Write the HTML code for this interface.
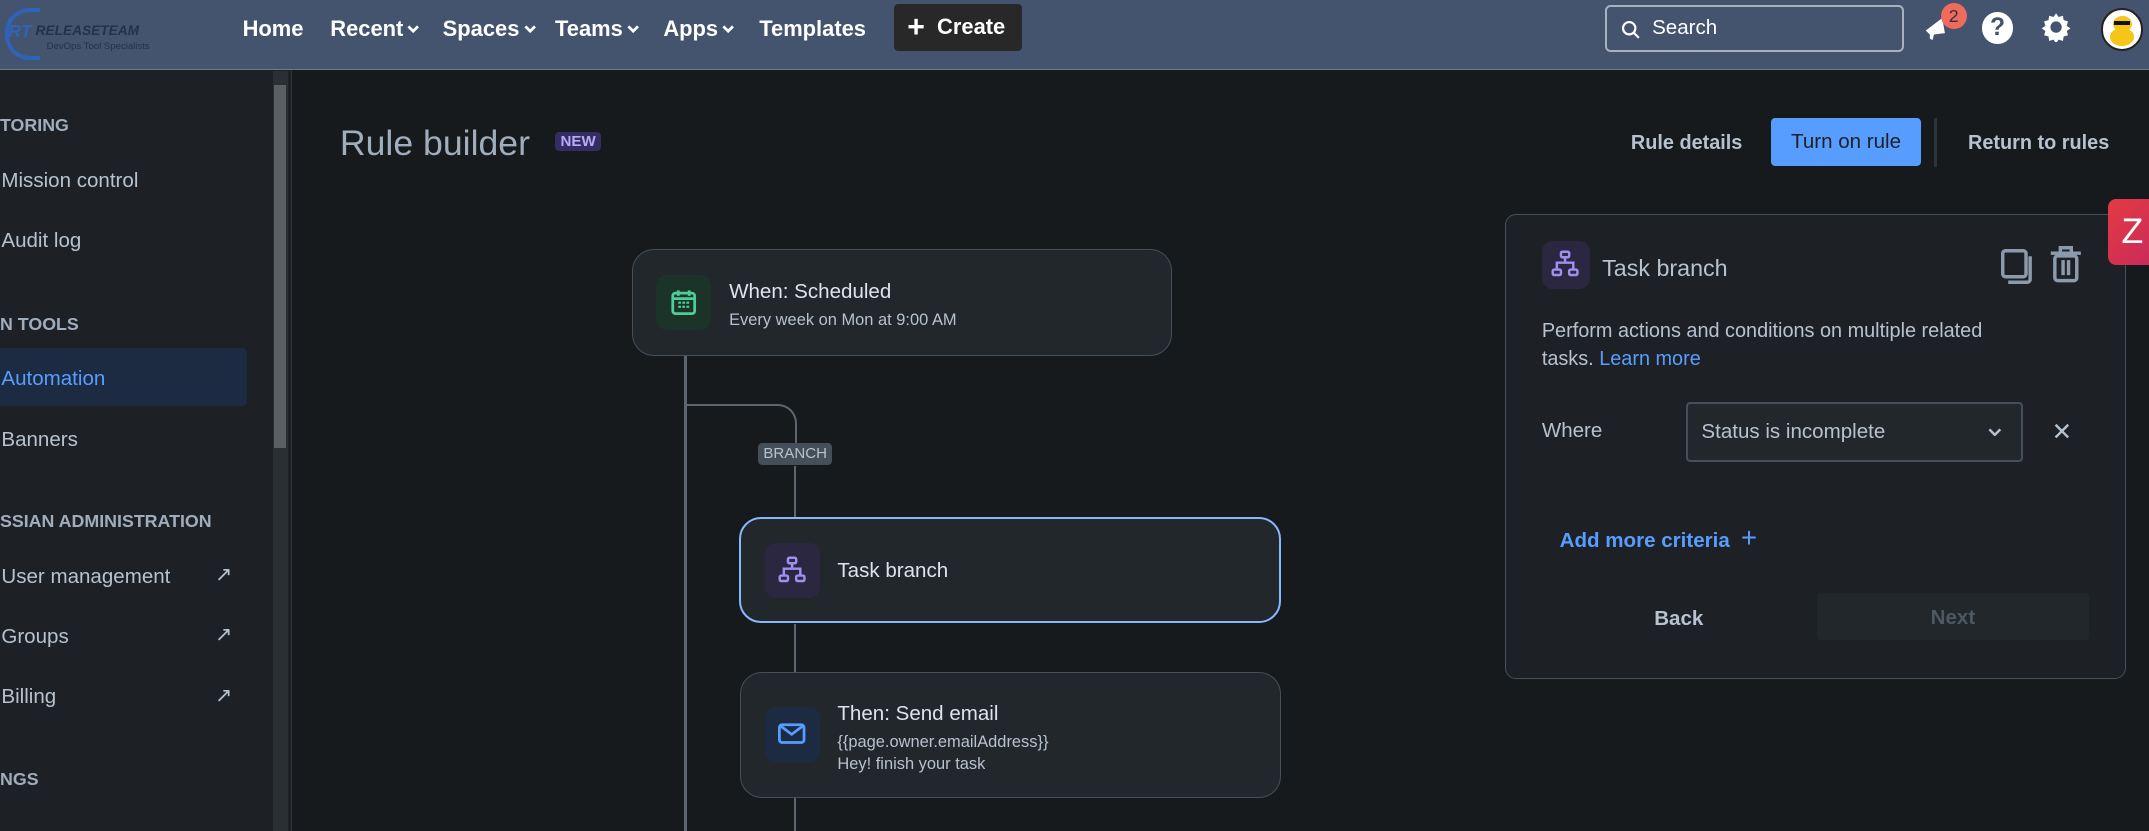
<!DOCTYPE html>
<html><head><meta charset="utf-8"><style>
html,body{margin:0;padding:0;}
body{width:2149px;height:830px;overflow:hidden;background:#161a1d;font-family:"Liberation Sans",sans-serif;}
#z{zoom:1.3705;width:1568px;height:606px;position:relative;overflow:hidden;color:#b6c2cf;}
.a{position:absolute;}
.hdr{left:0;top:0;width:1568px;height:50px;background:#44546f;border-bottom:1px solid #6b7a90;}
.nav{top:12px;color:#fff;font-size:16px;font-weight:bold;}
.nav svg{margin-left:3px;vertical-align:2px}
.side{left:0;top:51px;width:212px;height:555px;background:#1d2125;border-right:1px solid #2c333a;}
.sh{font-size:13px;font-weight:bold;color:#9fadbc;left:0;}
.si{font-size:15px;color:#b6c2cf;left:1px;}
.card{background:#22272b;border:1px solid #454f59;border-radius:16px;}
.ic{width:40px;height:40px;border-radius:8px;}
.t{font-size:15px;color:#dee4ea;}
.s{font-size:12px;color:#b6c2cf;}
.ln{background:#5c6670;}
</style></head><body><div id="z">
<div class="a hdr"></div>
<div class="a" style="left:4px;top:6px;width:140px;height:34px;">
<div class="a" style="left:0;top:0;width:22px;height:32px;border:3px solid #2f63b8;border-right:none;border-radius:18px 0 0 18px;"></div>
<div class="a" style="left:2px;top:9px;font:italic bold 13px 'Liberation Sans';color:#2f63b8;">RT</div>
<div class="a" style="left:22px;top:11px;font:italic bold 10px 'Liberation Sans';color:#23324a;">RELEASETEAM</div>
<div class="a" style="left:30px;top:24px;font-size:7px;color:#23324a;">DevOps Tool Specialists</div></div>
<div class="a nav" style="left:177px">Home</div>
<div class="a nav" style="left:241px">Recent<svg width="9" height="6" viewBox="0 0 9 6"><path d="M1 1l3.5 3.5L8 1" fill="none" stroke="#fff" stroke-width="2"/></svg></div>
<div class="a nav" style="left:323px">Spaces<svg width="9" height="6" viewBox="0 0 9 6"><path d="M1 1l3.5 3.5L8 1" fill="none" stroke="#fff" stroke-width="2"/></svg></div>
<div class="a nav" style="left:405px">Teams<svg width="9" height="6" viewBox="0 0 9 6"><path d="M1 1l3.5 3.5L8 1" fill="none" stroke="#fff" stroke-width="2"/></svg></div>
<div class="a nav" style="left:484px">Apps<svg width="9" height="6" viewBox="0 0 9 6"><path d="M1 1l3.5 3.5L8 1" fill="none" stroke="#fff" stroke-width="2"/></svg></div>
<div class="a nav" style="left:554px">Templates</div>
<div class="a" style="left:652px;top:3px;width:94px;height:34px;background:#282828;border-radius:3px;color:#fff;font-size:16px;font-weight:bold;line-height:34px;"><span style="margin-left:10px;font-size:22px;vertical-align:-2px">+</span>&nbsp; Create</div>
<div class="a" style="left:1171px;top:4px;width:215px;height:31px;border:2px solid #a8b1bd;border-radius:4px;color:#fff;font-size:15px;line-height:31px;">
<svg class="a" style="left:10px;top:9px" width="14" height="14" viewBox="0 0 14 14"><circle cx="6" cy="6" r="4.5" fill="none" stroke="#fff" stroke-width="1.6"/><path d="M9.5 9.5L13 13" stroke="#fff" stroke-width="1.6"/></svg><span style="margin-left:33px">Search</span></div>
<svg class="a" style="left:1403px;top:10px" width="20" height="22" viewBox="0 0 20 22"><path d="M2 12L14 3L16 14L8 15L7 19L5 18L5 15Z" fill="#fff"/></svg>
<div class="a" style="left:1416px;top:2px;width:19px;height:19px;border-radius:50%;background:#f06a5e;color:#333;font-size:13px;text-align:center;line-height:19px;">2</div>
<div class="a" style="left:1446px;top:9px;width:23px;height:23px;border-radius:50%;background:#fff;color:#44546f;font-size:18px;font-weight:bold;text-align:center;line-height:23px;">?</div>
<svg class="a" style="left:1489px;top:9px" width="22" height="22" viewBox="0 0 24 24"><path d="M12 1l2 3 3.5-1 .5 3.5 3.5 1-1 3.5 3 2-3 2 1 3.5-3.5 1-.5 3.5-3.5-1-2 3-2-3-3.5 1-.5-3.5-3.5-1 1-3.5-3-2 3-2-1-3.5 3.5-1 .5-3.5 3.5 1z" fill="#fff"/><circle cx="12" cy="12" r="4.5" fill="#44546f"/></svg>
<div class="a" style="left:1533px;top:6px;width:28px;height:28px;border-radius:50%;background:#fff;border:2px solid #222;overflow:hidden;"><div class="a" style="left:7px;top:4px;width:14px;height:12px;border-radius:50%;background:#f5c518"></div><div class="a" style="left:5px;top:13px;width:18px;height:13px;border-radius:50%;background:#f5c518"></div><div class="a" style="left:8px;top:8px;width:12px;height:3px;background:#111"></div></div>

<div class="a side"></div>
<div class="a" style="left:199px;top:52px;width:11px;height:554px;background:#2a2f33"></div>
<div class="a" style="left:200px;top:62px;width:9px;height:265px;background:#5a5f63"></div>
<div class="a sh" style="top:84px">TORING</div>
<div class="a si" style="top:123px">Mission control</div>
<div class="a si" style="top:167px">Audit log</div>
<div class="a sh" style="top:229px">N TOOLS</div>
<div class="a" style="left:0;top:254px;width:180px;height:42px;background:#1c2b41;border-radius:0 3px 3px 0"></div>
<div class="a si" style="top:268px;color:#579dff">Automation</div>
<div class="a si" style="top:312px">Banners</div>
<div class="a sh" style="top:373px">SSIAN ADMINISTRATION</div>
<div class="a si" style="top:412px">User management</div><div class="a si" style="left:157px;top:410px">↗</div>
<div class="a si" style="top:456px">Groups</div><div class="a si" style="left:157px;top:454px">↗</div>
<div class="a si" style="top:500px">Billing</div><div class="a si" style="left:157px;top:498px">↗</div>
<div class="a sh" style="top:561px">NGS</div>

<div class="a" style="left:248px;top:90px;font-size:26px;color:#9fadbc">Rule builder</div>
<div class="a" style="left:405px;top:96px;padding:1px 4px;background:#352c63;color:#b8acf6;font-size:11px;font-weight:bold;border-radius:3px">NEW</div>
<div class="a" style="left:1190px;top:96px;font-size:14.5px;color:#b6c2cf;font-weight:bold">Rule details</div>
<div class="a" style="left:1292px;top:86px;width:110px;height:35px;background:#579dff;border-radius:3px;color:#1d2125;font-size:15px;text-align:center;line-height:35px">Turn on rule</div>
<div class="a" style="left:1411px;top:86px;width:2px;height:36px;background:#2c333a"></div>
<div class="a" style="left:1436px;top:96px;font-size:14.5px;color:#b6c2cf;font-weight:bold">Return to rules</div>

<div class="a ln" style="left:499px;top:259px;width:2px;height:347px"></div>
<div class="a" style="left:500px;top:295px;width:80px;height:40px;border-top:2px solid #5c6670;border-right:2px solid #5c6670;border-radius:0 14px 0 0"></div>
<div class="a ln" style="left:579px;top:340px;width:2px;height:40px"></div>
<div class="a ln" style="left:579px;top:455px;width:2px;height:36px"></div>
<div class="a ln" style="left:579px;top:582px;width:2px;height:24px"></div>
<div class="a" style="left:553px;top:323px;padding:2px 4px;background:#454f59;color:#b6c2cf;font-size:11px;border-radius:3px">BRANCH</div>

<div class="a card" style="left:461px;top:182px;width:393px;height:76px"></div>
<div class="a ic" style="left:479px;top:201px;background:#1c3329"></div>
<svg class="a" style="left:489px;top:211px" width="20" height="20" viewBox="0 0 20 20"><rect x="2" y="3" width="16" height="15" rx="2" fill="none" stroke="#4bce97" stroke-width="2"/><path d="M2 7h16M6 1v4M14 1v4" stroke="#4bce97" stroke-width="2"/><path d="M6 10h2M9 10h2M12 10h2M6 13h2M9 13h2M12 13h2" stroke="#4bce97" stroke-width="1.5"/></svg>
<div class="a t" style="left:532px;top:204px">When: Scheduled</div>
<div class="a s" style="left:532px;top:227px">Every week on Mon at 9:00 AM</div>

<div class="a card" style="left:539px;top:377px;width:393px;height:75px;border:2px solid #85b8ff"></div>
<div class="a ic" style="left:558px;top:396px;background:#2b2740"></div>
<svg class="a" style="left:567px;top:405px" width="22" height="22" viewBox="0 0 22 22"><g fill="none" stroke="#9f8fef" stroke-width="1.8"><rect x="8" y="2" width="6" height="4" rx="1"/><rect x="2" y="15" width="6" height="4" rx="1"/><rect x="14" y="15" width="6" height="4" rx="1"/><path d="M11 6v4M5 15v-5h12v5"/></g></svg>
<div class="a t" style="left:611px;top:408px">Task branch</div>

<div class="a card" style="left:540px;top:490px;width:393px;height:91px"></div>
<div class="a ic" style="left:558px;top:516px;background:#1c2b41"></div>
<svg class="a" style="left:568px;top:527px" width="20" height="18" viewBox="0 0 20 18"><rect x="1" y="2" width="18" height="13" rx="2" fill="none" stroke="#579dff" stroke-width="2"/><path d="M2 3l8 6 8-6" fill="none" stroke="#579dff" stroke-width="2"/></svg>
<div class="a t" style="left:611px;top:512px">Then: Send email</div>
<div class="a s" style="left:611px;top:535px">{{page.owner.emailAddress}}</div>
<div class="a s" style="left:611px;top:551px">Hey! finish your task</div>

<div class="a" style="left:1098px;top:156px;width:452px;height:338px;background:#1d2125;border:1px solid #454f59;border-radius:8px"></div>
<div class="a ic" style="left:1125px;top:176px;width:35px;height:35px;background:#2b2740"></div>
<svg class="a" style="left:1131px;top:182px" width="22" height="22" viewBox="0 0 22 22"><g fill="none" stroke="#9f8fef" stroke-width="1.8"><rect x="8" y="2" width="6" height="4" rx="1"/><rect x="2" y="15" width="6" height="4" rx="1"/><rect x="14" y="15" width="6" height="4" rx="1"/><path d="M11 6v4M5 15v-5h12v5"/></g></svg>
<div class="a" style="left:1169px;top:186px;font-size:17px;color:#b6c2cf">Task branch</div>
<svg class="a" style="left:1459px;top:181px" width="26" height="28" viewBox="0 0 26 28"><rect x="2" y="2" width="17" height="19" rx="2" fill="none" stroke="#8c9bab" stroke-width="2.5"/><path d="M22 6v17a2 2 0 0 1-2 2H6" fill="none" stroke="#8c9bab" stroke-width="2.5"/></svg>
<svg class="a" style="left:1494px;top:179px" width="26" height="28" viewBox="0 0 26 28"><path d="M2 6h22M9 6V2h8v4" fill="none" stroke="#8c9bab" stroke-width="2.5"/><rect x="5" y="8" width="16" height="18" rx="2" fill="none" stroke="#8c9bab" stroke-width="2.5"/><path d="M11 11v11M15 11v11" stroke="#8c9bab" stroke-width="2.5"/></svg>
<div class="a" style="left:1125px;top:231px;font-size:14.5px;line-height:21px;color:#b6c2cf;width:355px">Perform actions and conditions on multiple related tasks. <span style="color:#579dff">Learn more</span></div>
<div class="a" style="left:1125px;top:306px;font-size:15px;color:#b6c2cf">Where</div>
<div class="a" style="left:1230px;top:293px;width:243px;height:41px;background:#22272b;border:2px solid #454f59;border-radius:3px;font-size:15px;color:#b6c2cf;line-height:41px"><span style="margin-left:10px">Status is incomplete</span><svg class="a" style="right:14px;top:18px" width="10" height="6" viewBox="0 0 10 6"><path d="M1 1l4 4 4-4" fill="none" stroke="#b6c2cf" stroke-width="1.8"/></svg></div>
<div class="a" style="left:1497px;top:304px;font-size:18px;color:#b6c2cf">✕</div>
<div class="a" style="left:1138px;top:381px;font-size:15px;font-weight:bold;color:#579dff">Add more criteria <span style="font-size:20px;font-weight:normal;margin-left:4px">+</span></div>
<div class="a" style="left:1207px;top:443px;font-size:15px;font-weight:bold;color:#b6c2cf">Back</div>
<div class="a" style="left:1326px;top:433px;width:198px;height:34px;background:#22272b;border-radius:3px;color:#4e5862;font-size:15px;font-weight:bold;text-align:center;line-height:36px">Next</div>
<div class="a" style="left:1538px;top:145px;width:34px;height:48px;background:linear-gradient(135deg,#e33b43,#c7285e);border-radius:6px 0 0 6px;color:#fff;font-size:26px;line-height:48px;padding-left:10px">Z</div>
</div></body></html>
